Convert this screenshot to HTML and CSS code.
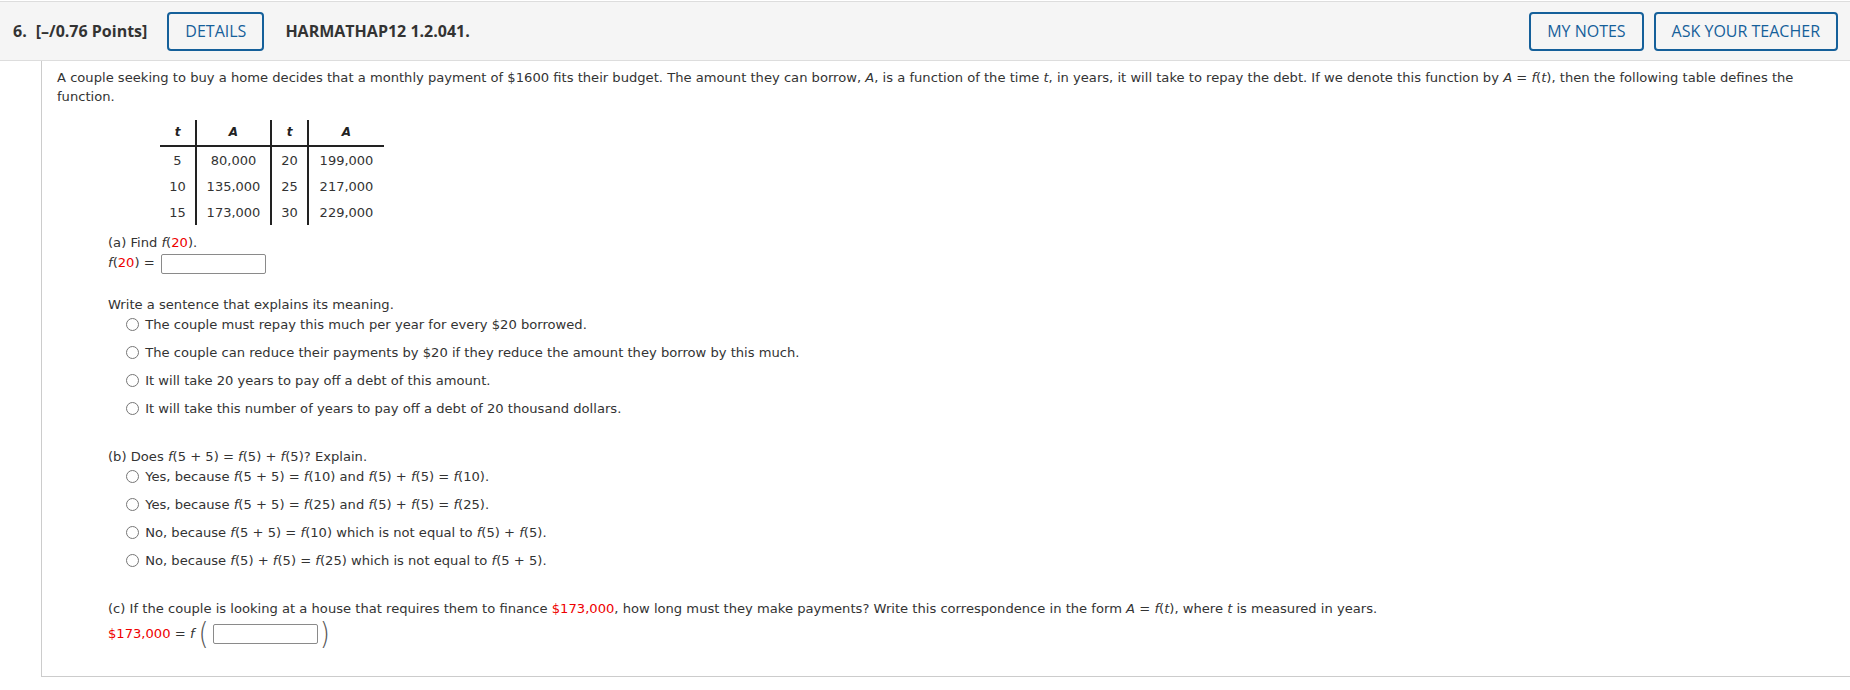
FILE: index.html
```html
<!DOCTYPE html>
<html lang="en">
<head>
    <meta charset="UTF-8">
    <meta name="viewport" content="width=device-width, initial-scale=1.0">
    <title>Question 6</title>
    <link rel="stylesheet" href="styles.css">
</head>
<body>
    <div class="question">
        <div class="q-header">
            <span class="q-num">6.</span>
            <span class="q-points">[&ndash;/0.76 Points]</span>
            <button class="btn">DETAILS</button>
            <span class="q-code">HARMATHAP12 1.2.041.</span>
            <span class="spacer"></span>
            <button class="btn">MY NOTES</button>
            <button class="btn">ASK YOUR TEACHER</button>
        </div>

        <div class="q-body">
            <p class="intro">A couple seeking to buy a home decides that a monthly payment of $1600 fits their budget. The amount they can borrow, <i>A</i>, is a function of the time <i>t</i>, in years, it will take to repay the debt. If we denote this function by <i>A</i> = <i>f</i>(<i>t</i>), then the following table defines the function.</p>

            <table class="data">
                <tr>
                    <th class="c-t">t</th>
                    <th class="c-a">A</th>
                    <th class="c-t">t</th>
                    <th class="c-a last">A</th>
                </tr>
                <tr><td>5</td><td>80,000</td><td>20</td><td class="last">199,000</td></tr>
                <tr><td>10</td><td>135,000</td><td>25</td><td class="last">217,000</td></tr>
                <tr><td>15</td><td>173,000</td><td>30</td><td class="last">229,000</td></tr>
            </table>

            <div class="part part-a">
                <div class="line">(a) Find <i>f</i>(<span class="red">20</span>).</div>
                <div class="line">
                    <i>f</i>(<span class="red">20</span>) = <input class="answer" type="text">
                </div>
                <div class="line prompt">Write a sentence that explains its meaning.</div>
                <label class="choice"><input type="radio" name="pa"> The couple must repay this much per year for every $20 borrowed.</label>
                <label class="choice"><input type="radio" name="pa"> The couple can reduce their payments by $20 if they reduce the amount they borrow by this much.</label>
                <label class="choice"><input type="radio" name="pa"> It will take 20 years to pay off a debt of this amount.</label>
                <label class="choice"><input type="radio" name="pa"> It will take this number of years to pay off a debt of 20 thousand dollars.</label>
            </div>

            <div class="part">
                <div class="line">(b) Does <i>f</i>(5 + 5) = <i>f</i>(5) + <i>f</i>(5)? Explain.</div>
                <label class="choice"><input type="radio" name="pb"> Yes, because <i>f</i>(5 + 5) = <i>f</i>(10) and <i>f</i>(5) + <i>f</i>(5) = <i>f</i>(10).</label>
                <label class="choice"><input type="radio" name="pb"> Yes, because <i>f</i>(5 + 5) = <i>f</i>(25) and <i>f</i>(5) + <i>f</i>(5) = <i>f</i>(25).</label>
                <label class="choice"><input type="radio" name="pb"> No, because <i>f</i>(5 + 5) = <i>f</i>(10) which is not equal to <i>f</i>(5) + <i>f</i>(5).</label>
                <label class="choice"><input type="radio" name="pb"> No, because <i>f</i>(5) + <i>f</i>(5) = <i>f</i>(25) which is not equal to <i>f</i>(5 + 5).</label>
            </div>

            <div class="part">
                <div class="line">(c) If the couple is looking at a house that requires them to finance <span class="red">$173,000</span>, how long must they make payments? Write this correspondence in the form <i>A</i> = <i>f</i>(<i>t</i>), where <i>t</i> is measured in years.</div>
                <div class="line eq">
                    <span class="red">$173,000</span>&nbsp;=&nbsp;<i>f</i><span class="paren">(</span><input class="answer" type="text"><span class="paren">)</span>
                </div>
            </div>
        </div>
    </div>
</body>
</html>
```

FILE: styles.css
```css
body {
    margin: 0;
    padding-top: 1px;
    background-color: #ffffff;
    color: #333333;
    font-family: Verdana, "DejaVu Sans", sans-serif;
    font-size: 13.12px;
}

/* Header bar */
.q-header {
    display: flex;
    align-items: center;
    height: 58px;
    padding: 0 12px 0 13px;
    background-color: #f5f5f5;
    border-top: 1px solid #dddddd;
    border-bottom: 1px solid #dddddd;
    font-family: "Open Sans", "Noto Sans", sans-serif;
    font-size: 16px;
    color: #333333;
}

.q-num,
.q-points,
.q-code {
    font-weight: 700;
}

.q-points {
    margin-left: 9px;
    margin-right: 20px;
}

.q-code {
    margin-left: 21px;
}

.spacer {
    flex: 1;
}

.btn {
    height: 39px;
    padding: 0 16px;
    margin-left: 10px;
    background-color: transparent;
    border: 2px solid #15609a;
    border-radius: 4px;
    color: #15609a;
    font-family: "Open Sans", "Noto Sans", sans-serif;
    font-size: 16px;
    cursor: pointer;
}

.q-header .btn:first-of-type {
    margin-left: 0;
}

/* Question body */
.q-body {
    margin-left: 41px;
    padding: 7px 15px 27px 15px;
    border-left: 1px solid #cccccc;
    border-bottom: 1px solid #cccccc;
    line-height: 19px;
}

.intro {
    margin: 0;
}

.red {
    color: #ee0000;
}

/* Table */
.data {
    border-collapse: separate;
    border-spacing: 0;
    margin: 14px 0 0 103px;
    color: #333333;
    font-size: 13px;
}

.data th,
.data td {
    padding: 0;
    text-align: center;
    border-right: 2px solid #222222;
}

.data th {
    height: 25px;
    border-bottom: 2px solid #222222;
    font-style: italic;
    font-weight: 700;
    color: #222222;
    font-size: 12px;
}

.data td {
    height: 26px;
}

.data .last {
    border-right: none;
}

.c-t {
    width: 35px;
}

.c-a {
    width: 73px;
}

.data th.last {
    width: 75px;
}

/* Parts */
.part {
    margin: 28px 0 0 51px;
}

.part-a {
    margin-top: 8px;
}

.line {
    line-height: 20px;
    min-height: 20px;
}

.answer {
    box-sizing: border-box;
    width: 105px;
    height: 20px;
    margin: 0 0 0 2px;
    padding: 0 4px;
    border: 1px solid #8a8a8a;
    border-radius: 2px;
    vertical-align: middle;
    font-family: inherit;
    font-size: 13px;
}

.prompt {
    margin-top: 21px;
}

.choice {
    display: block;
    height: 20px;
    line-height: 20px;
    margin-bottom: 8px;
}

.choice:last-child {
    margin-bottom: 0;
}

.choice input {
    width: 13px;
    height: 13px;
    margin: 0 2px 0 18px;
    vertical-align: -2px;
}

.eq {
    display: flex;
    align-items: center;
    height: 30px;
}

.eq .paren {
    font-size: 26px;
    font-weight: 200;
    color: #555555;
    margin: 0 2px;
    transform: scaleY(1.15);
}

.eq i {
    margin-right: 2px;
}
```
